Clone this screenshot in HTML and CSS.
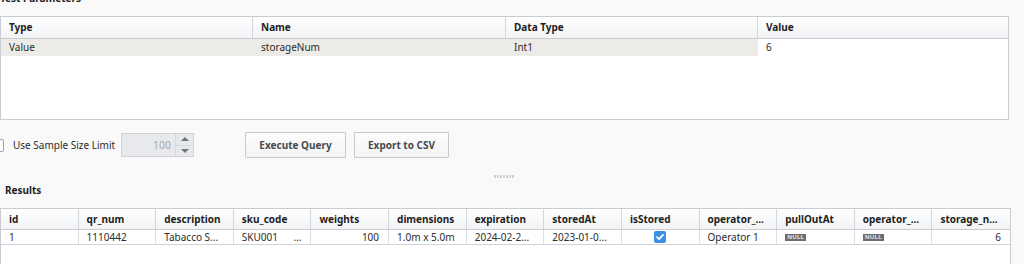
FILE: index.html
```html
<!DOCTYPE html>
<html>
<head>
<meta charset="utf-8">
<link rel="stylesheet" href="styles.css">
</head>
<body>
<div class="page">
  <div class="section-title cut">Test Parameters</div>

  <div class="params">
    <div class="grid-params head">
      <div class="hcell">Type</div>
      <div class="hcell">Name</div>
      <div class="hcell">Data Type</div>
      <div class="hcell last">Value</div>
    </div>
    <div class="grid-params prow">
      <div class="pcell">Value</div>
      <div class="pcell">storageNum</div>
      <div class="pcell">Int1</div>
      <div class="pcell edit">6</div>
    </div>
  </div>

  <div class="controls">
    <label class="chk-label"><span class="chk"></span>Use Sample Size Limit</label>
    <div class="spin">
      <div class="spin-val">100</div>
      <div class="spin-btns">
        <div class="spin-btn"><span class="tri up"></span></div>
        <div class="spin-btn"><span class="tri down"></span></div>
      </div>
    </div>
    <button class="btn exec">Execute Query</button>
    <button class="btn csv">Export to CSV</button>
  </div>

  <div class="splitter"><div class="grip"></div></div>

  <div class="section-title results-title">Results</div>

  <div class="results">
    <div class="grid-res head rhead">
      <div class="hcell">id</div>
      <div class="hcell">qr_num</div>
      <div class="hcell">description</div>
      <div class="hcell">sku_code</div>
      <div class="hcell">weights</div>
      <div class="hcell">dimensions</div>
      <div class="hcell">expiration</div>
      <div class="hcell">storedAt</div>
      <div class="hcell">isStored</div>
      <div class="hcell">operator_...</div>
      <div class="hcell">pullOutAt</div>
      <div class="hcell">operator_...</div>
      <div class="hcell last">storage_n...</div>
    </div>
    <div class="grid-res rrow">
      <div class="rcell">1</div>
      <div class="rcell">1110442</div>
      <div class="rcell">Tabacco S...</div>
      <div class="rcell sku"><span>SKU001</span><span class="more">...</span></div>
      <div class="rcell num">100</div>
      <div class="rcell">1.0m x 5.0m</div>
      <div class="rcell">2024-02-2...</div>
      <div class="rcell">2023-01-0...</div>
      <div class="rcell center">
        <span class="tick"><svg width="12" height="12" viewBox="0 0 12 12"><path d="M3 6.2 L5.1 8.2 L9 3.8" fill="none" stroke="#fff" stroke-width="1.8" stroke-linecap="round" stroke-linejoin="round"/></svg></span>
      </div>
      <div class="rcell">Operator 1</div>
      <div class="rcell"><span class="null">NULL</span></div>
      <div class="rcell"><span class="null">NULL</span></div>
      <div class="rcell num last">6</div>
    </div>
  </div>
</div>
</body>
</html>
```

FILE: styles.css
```css
* { box-sizing: border-box; }
html, body {
  margin: 0;
  padding: 0;
  background: #f9f9f9;
  font-family: "Noto Sans", "Open Sans", sans-serif;
  font-size: 10px;
  color: #2c2c2c;
  overflow: hidden;
  height: 264px;
}
.page {
  width: 1024px;
  height: 264px;
  display: flex;
  flex-direction: column;
  overflow: hidden;
}
.section-title {
  font-weight: bold;
  color: #1e1e1e;
  line-height: 14px;
  height: 14px;
  flex: none;
}
.cut {
  margin-top: -9px;
  padding-left: 0;
  margin-bottom: 11px;
}

/* params table */
.params {
  flex: none;
  width: 1009px;
  height: 104px;
  background: #fff;
  border: 1px solid #c9cdd1;
}
.grid-params {
  display: grid;
  grid-template-columns: 252px 253px 252px 1fr;
}
.head {
  height: 22px;
  background: linear-gradient(#ffffff, #f1f3f5);
  border-bottom: 1px solid #c9cdd1;
}
.hcell {
  font-weight: bold;
  color: #1e1e1e;
  padding-left: 8px;
  line-height: 21px;
  border-right: 1px solid #d3d7db;
  white-space: nowrap;
  overflow: hidden;
}
.hcell.last { border-right: none; }
.prow {
  height: 17px;
  background: #edebe7;
}
.pcell {
  padding-left: 8px;
  line-height: 17px;
  color: #2c2c2c;
}
.pcell.edit { background: #fff; }

/* controls */
.controls {
  flex: none;
  display: flex;
  align-items: center;
  margin-top: 12px;
  height: 26px;
}
.chk-label {
  display: flex;
  align-items: center;
  margin-left: -9px;
  width: 130px;
  color: #2c2c2c;
  white-space: nowrap;
}
.chk {
  width: 13px;
  height: 13px;
  border: 1px solid #9ea4aa;
  border-radius: 2px;
  background: #fff;
  margin-right: 9px;
  flex: none;
}
.spin {
  width: 73px;
  height: 24px;
  display: flex;
  background: #e7e9ec;
  border: 1px solid #cfd3d7;
}
.spin-val {
  flex: 1;
  text-align: right;
  padding-right: 4px;
  line-height: 22px;
  font-size: 10.5px;
  color: #a6a9ad;
}
.spin-btns {
  width: 18px;
  display: flex;
  flex-direction: column;
  border-left: 1px solid #d6d9dc;
}
.spin-btn {
  flex: 1;
  display: flex;
  align-items: center;
  justify-content: center;
}
.spin-btn + .spin-btn { border-top: 1px solid #d6d9dc; }
.tri {
  width: 0;
  height: 0;
  border-left: 4px solid transparent;
  border-right: 4px solid transparent;
}
.tri.up { border-bottom: 4px solid #6f767c; }
.tri.down { border-top: 4px solid #6f767c; }
.btn {
  font-family: inherit;
  font-size: 10px;
  font-weight: bold;
  color: #464a4e;
  height: 26px;
  padding: 0;
  white-space: nowrap;
  background: linear-gradient(#fcfcfc, #f3f4f5);
  border: 1px solid #c5c9cd;
  border-radius: 1px;
  flex: none;
}
.btn.exec { margin-left: 51px; width: 101px; }
.btn.csv { margin-left: 8px; width: 95px; }

/* splitter */
.splitter {
  flex: none;
  height: 32px;
  display: flex;
  align-items: center;
  justify-content: center;
}
.grip {
  width: 20px;
  height: 3px;
  margin-right: 16px;
  margin-top: 4px;
  background: repeating-linear-gradient(90deg, #cdd1d5 0 2px, transparent 2px 3px);
}
.results-title {
  padding-left: 5px;
  margin-top: -7px;
}

/* results */
.results {
  flex: none;
  margin-top: 11px;
  width: 1011px;
  height: 56px;
  background: #fff;
  border: 1px solid #c9cdd1;
  border-bottom: none;
}
.grid-res {
  display: grid;
  grid-template-columns: repeat(13, 1fr);
}
.rhead { height: 21px; }
.rhead .hcell { line-height: 20px; }
.rrow {
  height: 15px;
  border-bottom: 1px solid #cfd3d7;
}
.rcell {
  padding-left: 8px;
  line-height: 14px;
  border-right: 1px solid #dcdfe2;
  white-space: nowrap;
  overflow: hidden;
  display: flex;
  align-items: center;
  color: #2c2c2c;
}
.rcell.last { border-right: none; }
.rcell.num { justify-content: flex-end; padding-right: 9px; }
.rcell.center { justify-content: center; padding-left: 0; }
.rcell.sku { justify-content: space-between; padding-right: 9px; }
.tick {
  width: 12px;
  height: 12px;
  border-radius: 2px;
  background: #3b8fe6;
  display: flex;
}
.null {
  display: inline-block;
  background: #6d6d6d;
  color: #e4e4e4;
  font-size: 6px;
  font-weight: bold;
  line-height: 7px;
  height: 7px;
  padding: 0 2px;
  letter-spacing: 0.2px;
}
```
